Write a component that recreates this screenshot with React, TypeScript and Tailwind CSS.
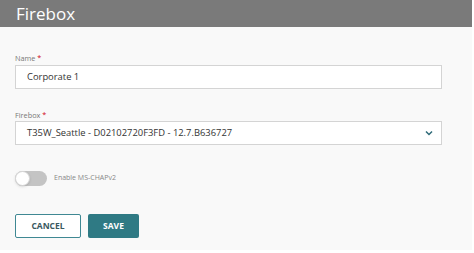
export default function App() {
  return (
    <div className="w-[474px] h-[253px] bg-white" style={{ fontFamily: '"Open Sans", sans-serif' }}>
      <div className="w-[472px] h-[250px] bg-[#f9f9f9] flex flex-col">
        {/* Header */}
        <div className="h-[27px] bg-[#7a7a7a] px-[16px] flex items-center">
          <span className="text-white text-[17px] leading-none">Firebox</span>
        </div>

        {/* Form */}
        <div className="px-[15px] pt-[25px] w-[457px]">
          <label className="block text-[7.3px] leading-[12px] text-[#777] mb-[1px]">
            Name <span className="text-[#d0021b]">*</span>
          </label>
          <div className="h-[24px] bg-white border border-[#d4d4d4] flex items-center pl-[11px] text-[9.4px] text-[#333]">
            Corporate 1
          </div>

          <label className="block mt-[20px] text-[7.3px] leading-[12px] text-[#777]">
            Firebox <span className="text-[#d0021b]">*</span>
          </label>
          <div className="h-[24px] bg-white border border-[#d4d4d4] flex items-center justify-between pl-[11px] pr-[8px] text-[9.4px] text-[#333]">
            <span>T35W_Seattle - D02102720F3FD - 12.7.B636727</span>
            <svg width="8" height="6" viewBox="0 0 8 6" fill="none">
              <path d="M1 1.5 L4 4.5 L7 1.5" stroke="#2e6a78" strokeWidth="1.5" />
            </svg>
          </div>

          {/* Toggle */}
          <div className="mt-[26px] flex items-center gap-[7px]">
            <div className="w-[32px] h-[15px] rounded-full bg-[#c4c4c4] flex items-center">
              <div className="w-[15px] h-[15px] rounded-full bg-white border border-[#d6d6d6] shadow-sm" />
            </div>
            <span className="text-[7px] text-[#888]">Enable MS-CHAPv2</span>
          </div>

          {/* Buttons */}
          <div className="mt-[28px] flex gap-[7px]">
            <button className="w-[66px] h-[24px] bg-white border border-[#3f8893] rounded-[2px] text-[8.5px] font-bold text-[#3a5860]">
              CANCEL
            </button>
            <button className="w-[51px] h-[24px] bg-[#2f7a84] rounded-[2px] text-[8.5px] font-bold text-white">
              SAVE
            </button>
          </div>
        </div>
      </div>
    </div>
  );
}
